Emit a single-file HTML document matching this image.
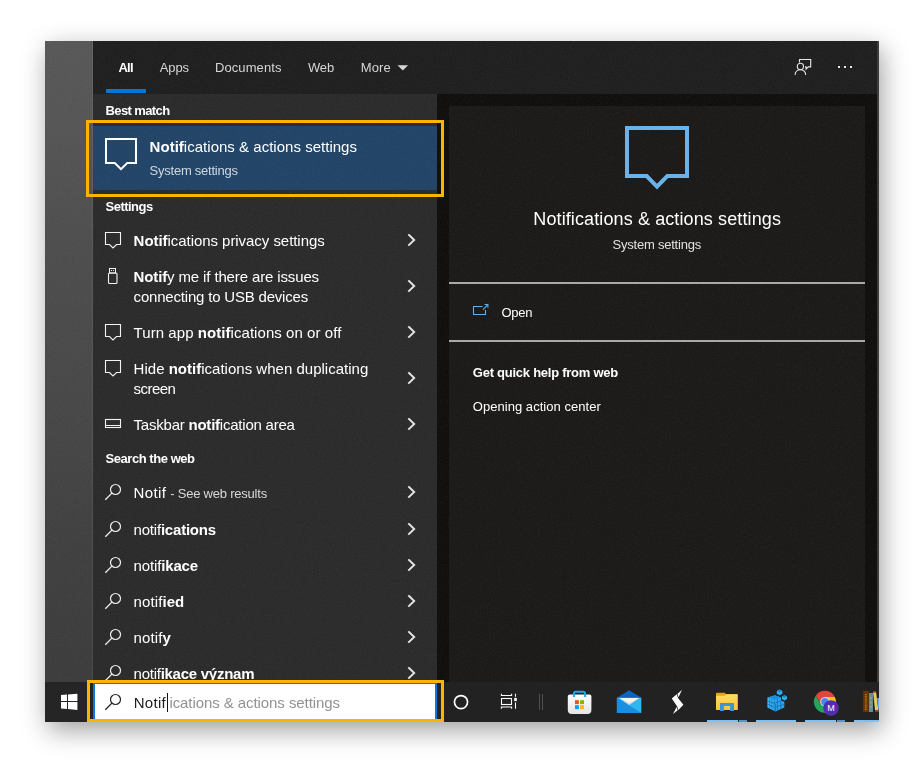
<!DOCTYPE html>
<html><head><meta charset="utf-8"><title>Search</title>
<style>
html,body{margin:0;padding:0;background:#fff;}
body{width:923px;height:769px;position:relative;overflow:hidden;font-family:"Liberation Sans",sans-serif;}
.a{position:absolute;display:block;}
.t{position:absolute;white-space:nowrap;line-height:20px;height:20px;}
b{font-weight:700;}
#win{left:45px;top:41px;width:834px;height:680.5px;background:#1f1f1f;box-shadow:3px 8px 24px rgba(0,0,0,0.38);}
#strip{left:45px;top:41px;width:48px;height:641px;background:linear-gradient(180deg,#575757 0%,#555 14%,#4e4e4e 30%,#494949 50%,#464646 62%,#404040 78%,#3c3c3c 100%);}
#stripline{left:92px;top:41px;width:1px;height:641px;background:rgba(255,255,255,0.07);}
#head{left:93px;top:41px;width:786px;height:53px;background:#1f1f1f;}
#lp{left:93px;top:94px;width:344px;height:588px;background:#2b2b2b;}
#band{left:437px;top:94px;width:442px;height:588px;background:#100f0e;}
#card{left:449px;top:106px;width:416px;height:576px;background:#1b1a19;}
#tb{left:45px;top:682px;width:834px;height:39.5px;background:#222;}
#tbs{left:45px;top:682px;width:48px;height:39.5px;background:#252525;}
#redge{left:877px;top:41px;width:2px;height:641px;background:#3a3a3a;}
#sel{left:93px;top:126px;width:344px;height:64px;background:#214467;}
#ul{left:106px;top:89px;width:40px;height:4px;background:#0078d7;}
.ob{border:3px solid #fdb400;box-sizing:border-box;}
#sbblue{left:93px;top:683px;width:344px;height:36px;background:#0a78d7;}
#sbwhite{left:95px;top:684px;width:340px;height:35px;background:#fff;}
.sep{left:449px;width:416px;height:2px;background:#a9a9a9;}
.ind{height:1.6px;top:720px;background:#7cc0f8;}
</style></head><body>
<div class="a" id="win"></div>
<div class="a" id="strip"></div>
<div class="a" id="head"></div>
<div class="a" id="lp"></div>
<div class="a" id="stripline"></div>
<div class="a" id="band"></div>
<div class="a" id="card"></div>
<div class="a" id="redge"></div>
<div class="a" id="sel"></div>
<svg class="a" style="left:45px;top:41px" width="834" height="681" viewBox="0 0 834 681"><defs><filter id="nz" x="0" y="0" width="100%" height="100%"><feTurbulence type="fractalNoise" baseFrequency="0.9" numOctaves="2" seed="3" result="t"/><feColorMatrix type="matrix" values="0 0 0 0 1  0 0 0 0 1  0 0 0 0 1  1.6 0 0 0 -0.62"/></filter></defs><g filter="url(#nz)" opacity="0.05"><rect x="48" y="0" width="786" height="53"/><rect x="48" y="53" width="344" height="588"/><rect x="0" y="641" width="834" height="40"/></g></svg>

<div class="a" id="ul"></div>
<div class="a sep" style="top:282px"></div>
<div class="a sep" style="top:340px"></div>
<!-- caret triangle for More -->
<svg class="a" style="left:397px;top:64px" width="12" height="8" viewBox="0 0 12 8"><path d="M0.5 1.2 H11.1 L5.8 6.4 Z" fill="#d6d6d6"/></svg>
<!-- feedback icon -->
<svg class="a" style="left:793px;top:57px" width="20" height="20" viewBox="0 0 20 20"><g fill="none" stroke="#e8e8e8" stroke-width="1.1"><circle cx="7.4" cy="9.4" r="3.1"/><path d="M2.1 18 C2.1 14.6 4.6 12.8 7.4 12.8 C10.2 12.8 12.7 14.6 12.7 18"/><path d="M6.5 5.4 V2.5 H17.7 V9.9 H15.3 L13.1 12.2 V9.9 H12"/></g></svg>
<!-- ellipsis -->
<div class="a" style="left:838px;top:66px;width:2px;height:2px;background:#e8e8e8"></div>
<div class="a" style="left:844px;top:66px;width:2px;height:2px;background:#e8e8e8"></div>
<div class="a" style="left:850px;top:66px;width:2px;height:2px;background:#e8e8e8"></div>
<!-- best match icon -->
<svg class="a" style="left:103px;top:136px" width="36" height="36" viewBox="0 0 36 36"><path d="M3 3 H33 V27 H24.2 L18 33.2 L11.8 27 H3 Z" fill="none" stroke="#fff" stroke-width="2" stroke-linejoin="miter"/></svg>
<!-- big icon -->
<svg class="a" style="left:621px;top:122px" width="72" height="72" viewBox="0 0 72 72"><path d="M6 6 H66 V54 H46.3 L36 64.6 L25.7 54 H6 Z" fill="none" stroke="#69b3ea" stroke-width="4" stroke-linejoin="miter"/></svg>
<!-- open icon -->
<svg class="a" style="left:471px;top:302px" width="20" height="16" viewBox="0 0 20 16"><g fill="none" stroke="#5fb0ea" stroke-width="1.1"><path d="M11.5 4.5 H2.5 V12.5 H14.5 V8"/><path d="M12 7.6 L16.6 2.8"/><path d="M13.6 2.5 H16.9 V5.8"/></g></svg>
<svg class="a" style="left:104px;top:231px" width="19" height="19" viewBox="0 0 19 19"><path d="M1.5 1.5 H16.5 V13.5 H12.5 L9 17 L5.5 13.5 H1.5 Z" fill="none" stroke="#f2f2f2" stroke-width="1.1" stroke-linejoin="miter"/></svg>
<svg class="a" style="left:104px;top:323px" width="19" height="19" viewBox="0 0 19 19"><path d="M1.5 1.5 H16.5 V13.5 H12.5 L9 17 L5.5 13.5 H1.5 Z" fill="none" stroke="#f2f2f2" stroke-width="1.1" stroke-linejoin="miter"/></svg>
<svg class="a" style="left:104px;top:359px" width="19" height="19" viewBox="0 0 19 19"><path d="M1.5 1.5 H16.5 V13.5 H12.5 L9 17 L5.5 13.5 H1.5 Z" fill="none" stroke="#f2f2f2" stroke-width="1.1" stroke-linejoin="miter"/></svg>
<svg class="a" style="left:106px;top:266px" width="14" height="20" viewBox="0 0 14 20"><rect x="3.5" y="2.5" width="6" height="4.5" fill="none" stroke="#f2f2f2" stroke-width="1"/><rect x="2.5" y="7" width="8.5" height="10.5" rx="1" fill="none" stroke="#f2f2f2" stroke-width="1.1"/><rect x="5" y="4" width="1" height="1" fill="#f2f2f2"/><rect x="7" y="4" width="1" height="1" fill="#f2f2f2"/></svg>
<svg class="a" style="left:104px;top:417px" width="19" height="13" viewBox="0 0 19 13"><rect x="1.5" y="2.5" width="15" height="8" fill="none" stroke="#f2f2f2" stroke-width="1.1"/><path d="M1.5 8.5 H16.5" stroke="#f2f2f2" stroke-width="1"/></svg>
<svg class="a" style="left:104px;top:482px" width="20" height="20" viewBox="0 0 20 20"><circle cx="11.5" cy="7.5" r="5" fill="none" stroke="#f0f0f0" stroke-width="1.2"/><path d="M7.9 11.1 L1.3 17.7" stroke="#f0f0f0" stroke-width="1.3" fill="none"/></svg>
<svg class="a" style="left:104px;top:519px" width="20" height="20" viewBox="0 0 20 20"><circle cx="11.5" cy="7.5" r="5" fill="none" stroke="#f0f0f0" stroke-width="1.2"/><path d="M7.9 11.1 L1.3 17.7" stroke="#f0f0f0" stroke-width="1.3" fill="none"/></svg>
<svg class="a" style="left:104px;top:555px" width="20" height="20" viewBox="0 0 20 20"><circle cx="11.5" cy="7.5" r="5" fill="none" stroke="#f0f0f0" stroke-width="1.2"/><path d="M7.9 11.1 L1.3 17.7" stroke="#f0f0f0" stroke-width="1.3" fill="none"/></svg>
<svg class="a" style="left:104px;top:591px" width="20" height="20" viewBox="0 0 20 20"><circle cx="11.5" cy="7.5" r="5" fill="none" stroke="#f0f0f0" stroke-width="1.2"/><path d="M7.9 11.1 L1.3 17.7" stroke="#f0f0f0" stroke-width="1.3" fill="none"/></svg>
<svg class="a" style="left:104px;top:627px" width="20" height="20" viewBox="0 0 20 20"><circle cx="11.5" cy="7.5" r="5" fill="none" stroke="#f0f0f0" stroke-width="1.2"/><path d="M7.9 11.1 L1.3 17.7" stroke="#f0f0f0" stroke-width="1.3" fill="none"/></svg>
<svg class="a" style="left:104px;top:663px" width="20" height="20" viewBox="0 0 20 20"><circle cx="11.5" cy="7.5" r="5" fill="none" stroke="#f0f0f0" stroke-width="1.2"/><path d="M7.9 11.1 L1.3 17.7" stroke="#f0f0f0" stroke-width="1.3" fill="none"/></svg>
<svg class="a" style="left:405px;top:232px" width="14" height="16" viewBox="0 0 14 16"><path d="M4 3 L9.2 8 L4 13" fill="none" stroke="#e6e6e6" stroke-width="1.9" stroke-linecap="square" stroke-linejoin="miter"/></svg>
<svg class="a" style="left:405px;top:278px" width="14" height="16" viewBox="0 0 14 16"><path d="M4 3 L9.2 8 L4 13" fill="none" stroke="#e6e6e6" stroke-width="1.9" stroke-linecap="square" stroke-linejoin="miter"/></svg>
<svg class="a" style="left:405px;top:324px" width="14" height="16" viewBox="0 0 14 16"><path d="M4 3 L9.2 8 L4 13" fill="none" stroke="#e6e6e6" stroke-width="1.9" stroke-linecap="square" stroke-linejoin="miter"/></svg>
<svg class="a" style="left:405px;top:370px" width="14" height="16" viewBox="0 0 14 16"><path d="M4 3 L9.2 8 L4 13" fill="none" stroke="#e6e6e6" stroke-width="1.9" stroke-linecap="square" stroke-linejoin="miter"/></svg>
<svg class="a" style="left:405px;top:416px" width="14" height="16" viewBox="0 0 14 16"><path d="M4 3 L9.2 8 L4 13" fill="none" stroke="#e6e6e6" stroke-width="1.9" stroke-linecap="square" stroke-linejoin="miter"/></svg>
<svg class="a" style="left:405px;top:484px" width="14" height="16" viewBox="0 0 14 16"><path d="M4 3 L9.2 8 L4 13" fill="none" stroke="#e6e6e6" stroke-width="1.9" stroke-linecap="square" stroke-linejoin="miter"/></svg>
<svg class="a" style="left:405px;top:521px" width="14" height="16" viewBox="0 0 14 16"><path d="M4 3 L9.2 8 L4 13" fill="none" stroke="#e6e6e6" stroke-width="1.9" stroke-linecap="square" stroke-linejoin="miter"/></svg>
<svg class="a" style="left:405px;top:557px" width="14" height="16" viewBox="0 0 14 16"><path d="M4 3 L9.2 8 L4 13" fill="none" stroke="#e6e6e6" stroke-width="1.9" stroke-linecap="square" stroke-linejoin="miter"/></svg>
<svg class="a" style="left:405px;top:593px" width="14" height="16" viewBox="0 0 14 16"><path d="M4 3 L9.2 8 L4 13" fill="none" stroke="#e6e6e6" stroke-width="1.9" stroke-linecap="square" stroke-linejoin="miter"/></svg>
<svg class="a" style="left:405px;top:629px" width="14" height="16" viewBox="0 0 14 16"><path d="M4 3 L9.2 8 L4 13" fill="none" stroke="#e6e6e6" stroke-width="1.9" stroke-linecap="square" stroke-linejoin="miter"/></svg>
<svg class="a" style="left:405px;top:665px" width="14" height="16" viewBox="0 0 14 16"><path d="M4 3 L9.2 8 L4 13" fill="none" stroke="#e6e6e6" stroke-width="1.9" stroke-linecap="square" stroke-linejoin="miter"/></svg>
<!-- taskbar -->
<div class="a" id="tb"></div>
<div class="a" id="tbs"></div>
<!-- windows logo -->
<svg class="a" style="left:61px;top:693px" width="17" height="18" viewBox="0 0 17 18"><path d="M0 2 L6 1.5 V8 H0 Z M7 1.45 L16.4 0.7 V8 H7 Z M0 9 H6 V15.9 L0 15.5 Z M7 9 H16.4 V17 L7 16 Z" fill="#fff"/></svg>
<div class="a" id="sbblue"></div>
<div class="a" id="sbwhite"></div>
<svg class="a" style="left:104px;top:692px" width="20" height="20" viewBox="0 0 20 20"><circle cx="11.5" cy="7.5" r="5" fill="none" stroke="#222" stroke-width="1.2"/><path d="M7.9 11.1 L1.3 17.7" stroke="#222" stroke-width="1.3" fill="none"/></svg>
<div class="a" style="left:166.5px;top:693px;width:1px;height:19px;background:#111"></div>
<!-- cortana -->
<svg class="a" style="left:451px;top:692px" width="20" height="20" viewBox="0 0 20 20"><circle cx="10" cy="10.1" r="6.55" fill="none" stroke="#fff" stroke-width="1.7"/></svg>
<!-- task view -->
<svg class="a" style="left:499px;top:692px" width="20" height="20" viewBox="0 0 20 20"><g fill="none" stroke="#fff" stroke-width="1.1"><rect x="2.5" y="6.5" width="10" height="6"/><path d="M2.4 1.7 V3.5 H12.6 V1.7 M2.4 16.8 V15 H12.6 V16.8"/><path d="M16.5 1.7 V4.8 M16.5 10.4 V16.8"/></g><rect x="15.2" y="5.9" width="2.6" height="3.2" fill="#fff"/></svg>
<div class="a" style="left:539px;top:694px;width:1px;height:16px;background:#505050"></div>
<div class="a" style="left:542px;top:694px;width:1px;height:16px;background:#505050"></div>
<!-- store -->
<svg class="a" style="left:567px;top:689px" width="26" height="27" viewBox="0 0 26 27"><defs><linearGradient id="bagg" x1="0" y1="0" x2="0" y2="1"><stop offset="0" stop-color="#ffffff"/><stop offset="1" stop-color="#e4e4e4"/></linearGradient></defs><path d="M0.8 7.5 Q0.8 5.5 2.8 5.5 H22.4 Q24.4 5.5 24.4 7.5 V21 Q24.4 25 20.4 25 H4.8 Q0.8 25 0.8 21 Z" fill="url(#bagg)"/><path d="M6.9 8 V5 Q6.9 2.8 9 2.8 H16 Q18.1 2.8 18.1 5 V8" fill="none" stroke="#22a6ea" stroke-width="2"/><rect x="8" y="11.2" width="3.9" height="3.9" fill="#f25022"/><rect x="13.1" y="11.2" width="3.9" height="3.9" fill="#7fba00"/><rect x="8" y="16.2" width="3.9" height="3.9" fill="#00a4ef"/><rect x="13.1" y="16.2" width="3.9" height="3.9" fill="#ffb900"/></svg>
<!-- mail -->
<svg class="a" style="left:616px;top:689px" width="27" height="25" viewBox="0 0 27 25"><path d="M0.9 8.8 L13.1 1.3 L25.3 8.8 V12 H0.9 Z" fill="#0d63bf"/><path d="M0.9 8.7 H25.3 V24 H0.9 Z" fill="#2eb8f0"/><path d="M0.9 8.7 L25.3 24 H0.9 Z" fill="#1a8fe0"/><path d="M3.4 8.9 H23.2 L13.3 15.8 Z" fill="#f4f4f4"/><path d="M3.4 8.9 L13.3 15.8 L23.2 8.9 L13.3 14.2 Z" fill="#d8d8d8"/></svg>
<!-- S icon -->
<svg class="a" style="left:669px;top:688px" width="18" height="28" viewBox="0 0 18 28"><path d="M2.8 10.5 L7.7 6.3 L9 9.9 L14.4 16.7 L9.4 22.1 L8.2 18.5 Z" fill="#fff"/><path d="M13 1.7 L8.4 6 L9.5 9.3 Z" fill="#fff"/><path d="M4 26.1 L7.6 19 L8.7 22.3 Z" fill="#fff"/></svg>
<!-- explorer -->
<svg class="a" style="left:715px;top:691px" width="24" height="21" viewBox="0 0 24 21"><defs><linearGradient id="fg" x1="0" y1="0" x2="0" y2="1"><stop offset="0" stop-color="#ffdb69"/><stop offset="1" stop-color="#fbc53a"/></linearGradient></defs><path d="M1 2.6 Q1 1.8 1.8 1.8 H9.8 L11.2 3.2 H22 Q22.6 3.2 22.6 3.8 V19 H1 Z" fill="#e8a40c"/><path d="M1 4.8 H9.6 L11 3.2 H22.6 V19 H1 Z" fill="url(#fg)"/><path d="M5 20 V11.9 H19 V20 H15.1 V15.1 H8.9 V20 Z" fill="#3a94e0"/></svg>
<!-- regedit -->
<svg class="a" style="left:765px;top:689px" width="24" height="25" viewBox="0 0 24 25"><path d="M2.6 8.6 L10 6.2 L16 8.4 V11.6 L19.3 12.8 V18.5 L10.5 22.4 L2.6 18.6 Z" fill="#2ba4e8"/><path d="M2.6 8.6 L10 6.2 L16 8.4 L9 10.8 Z" fill="#1d8fd8"/><path d="M2.6 8.6 L9 10.8 V21.6 L2.6 18.6 Z" fill="#3fbcf6"/><path d="M14.6 0.6 L17.4 2 V4.8 L14.6 6.2 L11.8 4.8 V2 Z M19.5 6.2 L22 7.5 V10.1 L19.5 11.4 L17 10.1 V7.5 Z" fill="#33b0f0"/><path d="M14.6 0.6 L17.4 2 L14.6 3.4 L11.8 2 Z M19.5 6.2 L22 7.5 L19.5 8.8 L17 7.5 Z" fill="#1c8cd6"/><g stroke="#1668ac" stroke-width="0.7" fill="none"><path d="M2.6 12 L9 14.4 M2.6 15.3 L9 18 M4.8 9.4 V19.6 M6.9 10.1 V20.6 M9 10.8 V21.8 M9 14.4 L16 11.8 M10.5 18.2 L19.3 15.4 M12.4 9.8 V21.4 M15.8 11.8 V20 M10.5 15 V22.4"/></g></svg>
<!-- chrome -->
<svg class="a" style="left:813px;top:690px" width="26" height="26" viewBox="0 0 26 26"><path d="M11.9 6.9 L21.75 6.9 A11 11 0 0 0 2.73 5.72 L7.66 14.25 L11.9 11.8 Z" fill="#e2463a"/><path d="M7.66 14.25 L2.73 5.72 A11 11 0 0 0 11.22 22.78 L16.14 14.25 L11.9 11.8 Z" fill="#23a55a"/><path d="M16.14 14.25 L11.22 22.78 A11 11 0 0 0 21.75 6.9 L11.9 6.9 L11.9 11.8 Z" fill="#fcc21f"/><circle cx="11.9" cy="11.8" r="4.6" fill="#f3f3f3"/><circle cx="11.9" cy="11.8" r="3.75" fill="#4688f1"/><circle cx="18" cy="18.1" r="7.8" fill="#4f2fb0"/><text x="18" y="21.2" font-size="9" text-anchor="middle" fill="#fff" font-family="Liberation Sans, sans-serif">M</text></svg>
<!-- books -->
<svg class="a" style="left:863px;top:690px" width="16" height="23" viewBox="0 0 16 23"><rect x="0.1" y="1" width="5.7" height="21" fill="#6a3406"/><path d="M2.9 4 V20.4" stroke="#a87418" stroke-width="2" stroke-dasharray="1.2 0.9" fill="none"/><rect x="6" y="3" width="4" height="19" fill="#6f8991"/><path d="M8 7 V20" stroke="#8aa3aa" stroke-width="1.6" stroke-dasharray="2 2.4" fill="none"/><path d="M10 1.2 H13 L15.5 21.7 H12.2 Z" fill="#e9c961"/><path d="M10 1.2 H13 L13.2 2.6 H10.2 Z M12 20.3 H15.3 L15.5 21.7 H12.2 Z" fill="#7d1232"/><path d="M14.2 7.9 H16 V19.8 H15.4 Z" fill="#6ea4f2"/></svg>
<!-- indicators -->
<div class="a ind" style="left:707px;width:31px"></div><div class="a ind" style="left:738.6px;width:8.2px;background:#5a93c4"></div>
<div class="a ind" style="left:756px;width:40px"></div>
<div class="a ind" style="left:805px;width:31px"></div><div class="a ind" style="left:836.6px;width:8.2px;background:#5a93c4"></div>
<div class="a ind" style="left:854px;width:25px"></div>
<div class="a" id="txt" style="left:0;top:0;width:923px;height:769px;will-change:transform">
<div class="t" id="t_all" style="left:118.4px;top:57.50px;font-size:13px;color:#fff;letter-spacing:-0.675px;"><b>All</b></div>
<div class="t" id="t_apps" style="left:159.7px;top:57.50px;font-size:13px;color:#d6d6d6;letter-spacing:-0.085px;">Apps</div>
<div class="t" id="t_docs" style="left:215.0px;top:57.50px;font-size:13px;color:#d6d6d6;letter-spacing:0.083px;">Documents</div>
<div class="t" id="t_web" style="left:308.0px;top:57.50px;font-size:13px;color:#d6d6d6;letter-spacing:-0.167px;">Web</div>
<div class="t" id="t_more" style="left:360.7px;top:57.50px;font-size:13px;color:#d6d6d6;letter-spacing:0.169px;">More</div>
<div class="t" id="t_best" style="left:105.5px;top:100.50px;font-size:13px;color:#fff;letter-spacing:-0.608px;"><b>Best match</b></div>
<div class="t" id="t_title" style="left:149.6px;top:136.80px;font-size:15px;color:#fff;letter-spacing:0.020px;"><b>Notif</b>ications &amp; actions settings</div>
<div class="t" id="t_sys" style="left:149.6px;top:160.50px;font-size:13px;color:#cfd8e2;letter-spacing:-0.244px;">System settings</div>
<div class="t" id="t_settings" style="left:105.5px;top:196.50px;font-size:13px;color:#fff;letter-spacing:-0.512px;"><b>Settings</b></div>
<div class="t" id="t_r1" style="left:133.6px;top:230.80px;font-size:15px;color:#fff;letter-spacing:-0.049px;"><b>Notif</b>ications privacy settings</div>
<div class="t" id="t_r2a" style="left:133.6px;top:266.80px;font-size:15px;color:#fff;letter-spacing:-0.132px;"><b>Notif</b>y me if there are issues</div>
<div class="t" id="t_r2b" style="left:133.6px;top:286.80px;font-size:15px;color:#fff;letter-spacing:-0.195px;">connecting to USB devices</div>
<div class="t" id="t_r3" style="left:133.6px;top:322.80px;font-size:15px;color:#fff;letter-spacing:0.058px;">Turn app <b>notif</b>ications on or off</div>
<div class="t" id="t_r4a" style="left:133.6px;top:358.80px;font-size:15px;color:#fff;letter-spacing:0.012px;">Hide <b>notif</b>ications when duplicating</div>
<div class="t" id="t_r4b" style="left:133.6px;top:378.80px;font-size:15px;color:#fff;letter-spacing:-0.555px;">screen</div>
<div class="t" id="t_r5" style="left:133.6px;top:414.80px;font-size:15px;color:#fff;letter-spacing:-0.226px;">Taskbar <b>notif</b>ication area</div>
<div class="t" id="t_stw" style="left:105.5px;top:448.50px;font-size:13px;color:#fff;letter-spacing:-0.448px;"><b>Search the web</b></div>
<div class="t" id="t_w1" style="left:133.6px;top:482.80px;font-size:15px;color:#fff;letter-spacing:0.351px;">Notif</div>
<div class="t" id="t_w1b" style="left:170.2px;top:483.50px;font-size:13px;color:#d8d8d8;letter-spacing:-0.214px;">- See web results</div>
<div class="t" id="t_w2" style="left:133.6px;top:519.80px;font-size:15px;color:#fff;letter-spacing:-0.211px;">notif<b>ications</b></div>
<div class="t" id="t_w3" style="left:133.6px;top:555.80px;font-size:15px;color:#fff;letter-spacing:-0.151px;">notif<b>ikace</b></div>
<div class="t" id="t_w4" style="left:133.6px;top:591.80px;font-size:15px;color:#fff;letter-spacing:0.094px;">notif<b>ied</b></div>
<div class="t" id="t_w5" style="left:133.6px;top:627.80px;font-size:15px;color:#fff;letter-spacing:0.116px;">notif<b>y</b></div>
<div class="t" id="t_w6" style="left:133.6px;top:663.80px;font-size:15px;color:#fff;letter-spacing:-0.264px;">notif<b>ikace význam</b></div>
<div class="t" id="t_big" style="left:533.3px;top:208.76px;font-size:18px;color:#fff;letter-spacing:0.112px;">Notifications &amp; actions settings</div>
<div class="t" id="t_sys2" style="left:612.5px;top:234.50px;font-size:13px;color:#e0e0e0;letter-spacing:-0.218px;">System settings</div>
<div class="t" id="t_open" style="left:501.4px;top:302.50px;font-size:13px;color:#fff;letter-spacing:-0.253px;">Open</div>
<div class="t" id="t_help" style="left:472.8px;top:362.50px;font-size:13px;color:#fff;letter-spacing:-0.251px;"><b>Get quick help from web</b></div>
<div class="t" id="t_oac" style="left:472.8px;top:396.50px;font-size:13px;color:#fff;letter-spacing:0.038px;">Opening action center</div>
<div class="t" id="t_in" style="left:133.7px;top:692.80px;font-size:15px;color:#1d1d1d;letter-spacing:0.291px;">Notif</div>
<div class="t" id="t_inb" style="left:169.4px;top:692.80px;font-size:15px;color:#929292;letter-spacing:-0.074px;">ications &amp; actions settings</div>
</div>
<!-- annotations -->
<div class="a ob" style="left:86px;top:120px;width:358px;height:77px"></div>
<div class="a ob" style="left:87px;top:680px;width:357px;height:42px"></div>
</body></html>
